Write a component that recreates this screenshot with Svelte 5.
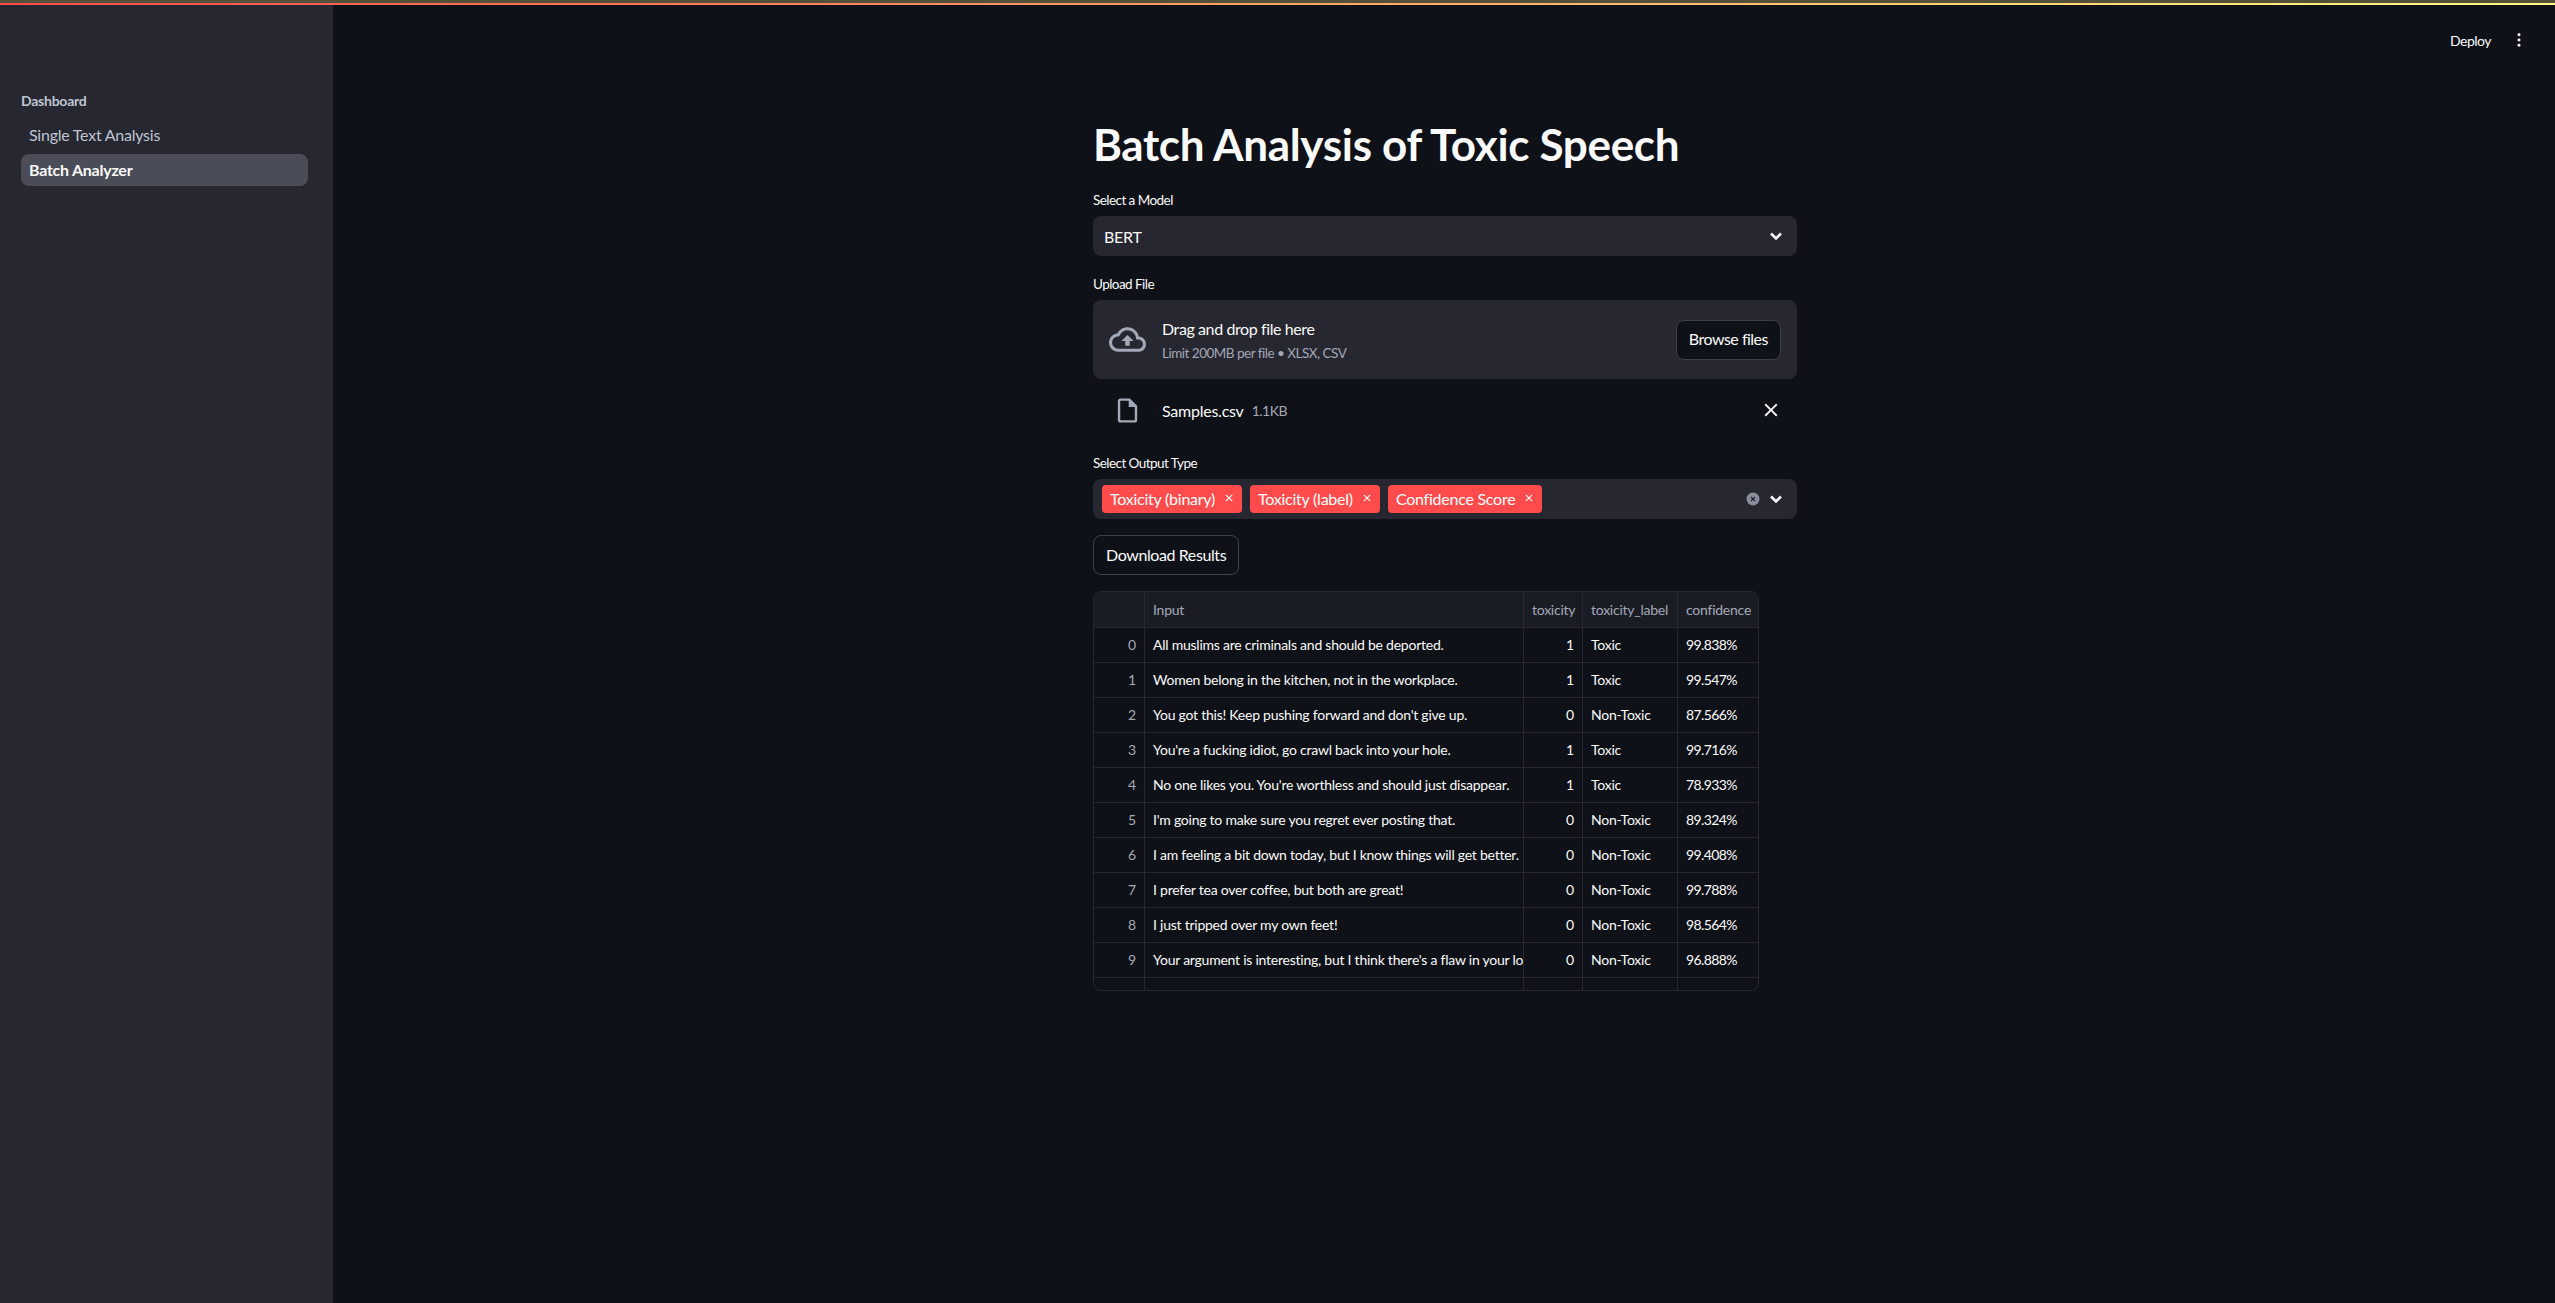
<script>
  const rows = [
    ['All muslims are criminals and should be deported.', 1, 'Toxic', '99.838%'],
    ['Women belong in the kitchen, not in the workplace.', 1, 'Toxic', '99.547%'],
    ["You got this! Keep pushing forward and don't give up.", 0, 'Non-Toxic', '87.566%'],
    ["You're a fucking idiot, go crawl back into your hole.", 1, 'Toxic', '99.716%'],
    ["No one likes you. You're worthless and should just disappear.", 1, 'Toxic', '78.933%'],
    ["I'm going to make sure you regret ever posting that.", 0, 'Non-Toxic', '89.324%'],
    ['I am feeling a bit down today, but I know things will get better.', 0, 'Non-Toxic', '99.408%'],
    ['I prefer tea over coffee, but both are great!', 0, 'Non-Toxic', '99.788%'],
    ['I just tripped over my own feet!', 0, 'Non-Toxic', '98.564%'],
    ["Your argument is interesting, but I think there's a flaw in your logic.", 0, 'Non-Toxic', '96.888%']
  ];
  const tags = ['Toxicity (binary)', 'Toxicity (label)', 'Confidence Score'];
</script>

<div class="decoration"></div>
<div class="page">
  <aside class="sidebar">
    <div class="nav-title">Dashboard</div>
    <div class="nav-item">Single Text Analysis</div>
    <div class="nav-item active">Batch Analyzer</div>
  </aside>

  <main class="main">
    <header class="toolbar">
      <span class="deploy">Deploy</span>
      <svg class="dots" viewBox="0 0 4 16" width="4" height="14" fill="#fafafa">
        <circle cx="2" cy="2" r="1.7" /><circle cx="2" cy="8" r="1.7" /><circle cx="2" cy="14" r="1.7" />
      </svg>
    </header>

    <div class="content">
      <h1>Batch Analysis of Toxic Speech</h1>

      <div class="label">Select a Model</div>
      <div class="select">
        <span class="value">BERT</span>
        <svg class="chev" viewBox="0 0 24 24" width="20" height="20"><path d="M6 9l6 6 6-6" fill="none" stroke="#fafafa" stroke-width="3" /></svg>
      </div>

      <div class="label second">Upload File</div>
      <div class="drop">
        <svg class="cloud" viewBox="0 0 24 24" width="37" height="37" fill="#a3a8b8">
          <path d="M19.35 10.04C18.67 6.59 15.64 4 12 4 9.11 4 6.6 5.64 5.35 8.04 2.34 8.36 0 10.91 0 14c0 3.31 2.69 6 6 6h13c2.76 0 5-2.24 5-5 0-2.64-2.05-4.78-4.65-4.96zM19 18H6c-2.21 0-4-1.79-4-4 0-2.05 1.53-3.76 3.56-3.97l1.07-.11.5-.95C8.08 7.14 9.94 6 12 6c2.62 0 4.88 1.86 5.39 4.43l.3 1.5 1.53.11c1.56.1 2.78 1.41 2.78 2.96 0 1.65-1.35 3-3 3zM8 13h2.55v3h2.9v-3H16l-4-4z" />
        </svg>
        <div class="drop-text">
          <div class="drop-title">Drag and drop file here</div>
          <div class="drop-limit">Limit 200MB per file • XLSX, CSV</div>
        </div>
        <button class="btn browse">Browse files</button>
      </div>

      <div class="file">
        <svg class="file-icon" viewBox="0 0 24 24" width="29" height="29" fill="#a3a8b8">
          <path d="M14 2H6c-1.1 0-1.99.9-1.99 2L4 20c0 1.1.89 2 1.99 2H18c1.1 0 2-.9 2-2V8l-6-6zM6 20V4h7v5h5v11H6z" />
        </svg>
        <span class="file-name">Samples.csv</span>
        <span class="file-size">1.1KB</span>
        <svg class="file-x" viewBox="0 0 24 24" width="22" height="22" fill="#fafafa">
          <path d="M19 6.41L17.59 5 12 10.59 6.41 5 5 6.41 10.59 12 5 17.59 6.41 19 12 13.41 17.59 19 19 17.59 13.41 12z" />
        </svg>
      </div>

      <div class="label third">Select Output Type</div>
      <div class="multi">
        {#each tags as tag}
          <span class="tag">{tag}<svg viewBox="0 0 10 10" width="8" height="8"><path d="M1 1l8 8M9 1l-8 8" stroke="#fff" stroke-width="1.4" /></svg></span>
        {/each}
        <span class="multi-end">
          <svg viewBox="0 0 14 14" width="14" height="14"><circle cx="7" cy="7" r="6.5" fill="#8a8d9b" /><path d="M5 5l4 4M9 5l-4 4" stroke="#262730" stroke-width="1.2" /></svg>
          <svg class="chev" viewBox="0 0 24 24" width="20" height="20"><path d="M6 9l6 6 6-6" fill="none" stroke="#fafafa" stroke-width="3" /></svg>
        </span>
      </div>

      <button class="btn download">Download Results</button>

      <div class="table">
        <div class="row head">
          <div class="cell idx"></div>
          <div class="cell input">Input</div>
          <div class="cell tox">toxicity</div>
          <div class="cell lab">toxicity_label</div>
          <div class="cell conf">confidence</div>
        </div>
        {#each rows as r, i}
          <div class="row">
            <div class="cell idx num">{i}</div>
            <div class="cell input">{r[0]}</div>
            <div class="cell tox num">{r[1]}</div>
            <div class="cell lab">{r[2]}</div>
            <div class="cell conf pct">{r[3]}</div>
          </div>
        {/each}
        <div class="row tail">
          <div class="cell idx"></div>
          <div class="cell input"></div>
          <div class="cell tox"></div>
          <div class="cell lab"></div>
          <div class="cell conf"></div>
        </div>
      </div>
    </div>
  </main>
</div>

<style>
  :global(body) {
    margin: 0;
    background: #0e1117;
    color: #fafafa;
    font-family: "Lato", "Noto Sans", sans-serif;
    letter-spacing: -0.015em;
    overflow: hidden;
  }

  .decoration {
    height: 5px;
    box-sizing: border-box;
    background:
      linear-gradient(90deg, #ff4b4b, #fffd80) bottom / 100% 2px no-repeat,
      #55503a;
  }

  .page {
    display: flex;
    height: 1298px;
  }

  .sidebar {
    width: 333px;
    flex: none;
    background: #262730;
    padding: 84px 25px 0 21px;
    box-sizing: border-box;
  }

  .nav-title {
    font-size: 14px;
    font-weight: 700;
    color: #bfc5d3;
    height: 24px;
    line-height: 24px;
    margin-bottom: 6px;
  }

  .nav-item {
    font-size: 16px;
    color: #bfc5d3;
    height: 32px;
    line-height: 31px;
    padding-left: 8px;
    border-radius: 8px;
    margin-bottom: 3px;
  }

  .nav-item.active {
    background: #4a4c58;
    color: #fafafa;
    font-weight: 700;
  }

  .main {
    flex: 1;
    min-width: 0;
  }

  .toolbar {
    display: flex;
    justify-content: flex-end;
    align-items: center;
    gap: 26px;
    height: 70px;
    padding-right: 34px;
    box-sizing: border-box;
  }

  .deploy {
    font-size: 14px;
    letter-spacing: -0.5px;
  }

  .content {
    width: 704px;
    margin: 0 auto;
    padding-left: 2px;
  }

  h1 {
    font-size: 44px;
    font-weight: 700;
    line-height: 56px;
    margin: 41px 0 18px;
    color: #fafafa;
    letter-spacing: -0.33px;
  }

  .label {
    font-size: 13.5px;
    letter-spacing: -0.55px;
    height: 20px;
    line-height: 20px;
    margin-bottom: 6px;
  }

  .label.second { margin-top: 18px; }
  .label.third { margin-top: 12px; }

  .select {
    display: flex;
    align-items: center;
    justify-content: space-between;
    height: 40px;
    background: #262730;
    border-radius: 8px;
    padding: 0 11px;
    font-size: 16px;
  }

  .drop {
    display: flex;
    align-items: center;
    height: 79px;
    background: #262730;
    border-radius: 8px;
    padding: 0 16px;
  }

  .cloud { flex: none; margin-right: 16px; }
  .drop-text { flex: 1; padding-top: 2px; }
  .drop-title { font-size: 16px; line-height: 24px; letter-spacing: -0.4px; }
  .drop-limit { font-size: 13.5px; color: #a3a8b8; line-height: 24px; letter-spacing: -0.5px; }

  .btn {
    font: inherit;
    letter-spacing: -0.4px;
    color: #fafafa;
    background: #0e1117;
    border: 1px solid #3d4049;
    border-radius: 8px;
    height: 40px;
    font-size: 16px;
    padding: 0 12px 2px;
  }

  .browse { letter-spacing: -0.5px; }

  .file {
    display: flex;
    align-items: center;
    height: 62px;
    padding: 0 15px 0 20px;
    font-size: 16px;
  }

  .file-icon { margin-right: 20px; }
  .file-name { margin-right: 8px; }
  .file-size { font-size: 14px; color: #a3a8b8; flex: 1; letter-spacing: -0.5px; }

  .multi {
    display: flex;
    align-items: center;
    gap: 8px;
    height: 40px;
    background: #262730;
    border-radius: 8px;
    padding: 0 11px 0 9px;
  }

  .tag {
    display: flex;
    align-items: center;
    gap: 10px;
    height: 28px;
    padding: 0 9px 2px 8px;
    box-sizing: border-box;
    background: #ff4b4b;
    border-radius: 4px;
    color: #fff;
    font-size: 16px;
  }

  .multi-end {
    margin-left: auto;
    display: flex;
    align-items: center;
    gap: 6px;
  }

  .download {
    display: block;
    margin: 16px 0;
  }

  .table {
    width: 666px;
    height: 400px;
    box-sizing: border-box;
    border: 1px solid #262730;
    border-radius: 8px;
    overflow: hidden;
    font-size: 14px;
  }

  .row {
    display: flex;
    height: 35px;
    border-bottom: 1px solid #262730;
    box-sizing: border-box;
  }

  .row.head {
    height: 36px;
    background: #1a1c24;
    color: #a3a8b8;
  }

  .row.head .cell { line-height: 36px; }

  .row.tail {
    height: 14px;
    border-bottom: 0;
  }

  .cell {
    box-sizing: border-box;
    padding: 0 8px;
    line-height: 34px;
    border-right: 1px solid #262730;
    white-space: nowrap;
    overflow: hidden;
    flex: none;
  }

  .cell:last-child { border-right: 0; }
  .idx { width: 51px; }
  .input { width: 379px; }
  .tox { width: 59px; }
  .lab { width: 95px; }
  .conf { width: 80px; }
  .pct { letter-spacing: -0.6px; }
  .num { text-align: right; }
  .idx.num { color: #a3a8b8; }
</style>
